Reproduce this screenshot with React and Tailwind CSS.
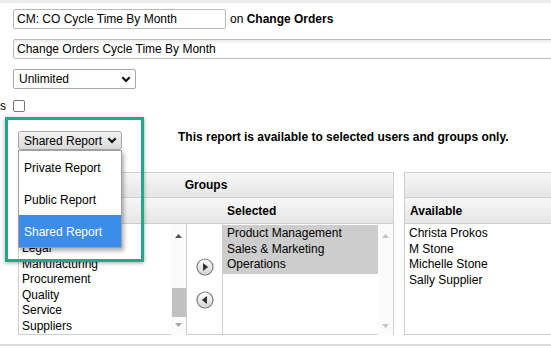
import React from 'react'

const GROUPS_AVAILABLE = ['Legal', 'Manufacturing', 'Procurement', 'Quality', 'Service', 'Suppliers']
const GROUPS_SELECTED = ['Product Management', 'Sales & Marketing', 'Operations']
const USERS_AVAILABLE = ['Christa Prokos', 'M Stone', 'Michelle Stone', 'Sally Supplier']
const SHARE_OPTIONS = ['Private Report', 'Public Report', 'Shared Report']

function Chevron() {
  return (
    <svg width="10" height="7" viewBox="0 0 10 7">
      <path d="M1.3 1.3 L5 5 L8.7 1.3" fill="none" stroke="#111" strokeWidth="2.2" />
    </svg>
  )
}

function ScrollArrow({ up, color }) {
  return (
    <svg width="7" height="4" viewBox="0 0 7 4">
      <polygon points={up ? '0,4 7,4 3.5,0' : '0,0 7,0 3.5,4'} fill={color} />
    </svg>
  )
}

function MoveButton({ dir }) {
  return (
    <svg width="18" height="18" viewBox="0 0 18 18">
      <defs>
        <linearGradient id={'mb' + dir} x1="0" y1="0" x2="0" y2="1">
          <stop offset="0" stopColor="#ffffff" />
          <stop offset="1" stopColor="#d4d4d4" />
        </linearGradient>
      </defs>
      <circle cx="9" cy="9" r="8" fill={'url(#mb' + dir + ')'} stroke="#7d7d7d" strokeWidth="1.2" />
      {dir === 'right'
        ? <polygon points="7,5 12.2,9 7,13" fill="#333" />
        : <polygon points="11,5 5.8,9 11,13" fill="#333" />}
    </svg>
  )
}

const headRow = 'bg-linear-to-b from-[#f7f7f7] to-[#e6e6e6] border-b border-[#cfcfcf]'

export default function App() {
  return (
    <div className="relative w-[551px] h-[349px] overflow-hidden bg-white text-black text-[12px] font-['Liberation_Sans',Arial,sans-serif]">
      <div className="h-[3px] bg-[#ececec]" />

      {/* report name */}
      <div className="flex items-center mt-[6px] pl-[13px] h-[20px]">
        <div className="w-[213px] h-[20px] border border-[#b8b8b8] rounded-[2px] pl-[3px] flex items-center">CM: CO Cycle Time By Month</div>
        <span className="ml-[4px]">on <b>Change Orders</b></span>
      </div>

      {/* description */}
      <div className="mt-[10px] pl-[13px]">
        <div className="w-[600px] h-[20px] border border-[#bdbdbd] rounded-[2px] pl-[3px] flex items-center shadow-[inset_0_2px_3px_rgba(0,0,0,0.08)]">Change Orders Cycle Time By Month</div>
      </div>

      {/* row limit */}
      <div className="mt-[10px] pl-[13px]">
        <div className="w-[123px] h-[20px] border border-[#a9a9a9] rounded-[2px] pl-[5px] pr-[4px] flex items-center justify-between">
          <span>Unlimited</span>
          <Chevron />
        </div>
      </div>

      {/* checkbox */}
      <div className="mt-[11px] flex items-center h-[12px]">
        <span className="w-[13px] leading-[12px]">s</span>
        <div className="w-[12px] h-[12px] border border-[#767676] rounded-[2px] bg-white" />
      </div>

      {/* sharing */}
      <div className="mt-[19px] flex items-start pl-[18px]">
        <div className="relative">
          <div className="w-[104px] h-[19px] border border-[#a5a5a5] rounded-[3px] bg-linear-to-b from-[#f3f3f3] to-[#d9d9d9] pl-[5px] flex items-center gap-[5px]">
            <span>Shared Report</span>
            <Chevron />
          </div>
          <div className="absolute z-20 left-0 top-[19px] w-[104px] bg-white border border-[#a0a0a0] shadow-[2px_3px_4px_rgba(0,0,0,0.3)]">
            {SHARE_OPTIONS.map(o => (
              <div key={o} className={'h-[32px] flex items-center pl-[5px] pt-[1px] ' + (o === 'Shared Report' ? 'bg-[#3c8de9] text-white' : '')}>{o}</div>
            ))}
          </div>
        </div>
        <span className="ml-[56px] -mt-[1px] font-bold leading-[14px]">This report is available to selected users and groups only.</span>
      </div>

      {/* groups / users */}
      <div className="flex mt-[22px]">
        <div className="ml-[18px] w-[376px] shrink-0 border border-[#cfcfcf]">
          <div className={'h-[25px] flex items-center justify-center font-bold ' + headRow}>Groups</div>
          <div className={'h-[26px] grid grid-cols-[168px_36px_1fr] font-bold ' + headRow}>
            <div />
            <div />
            <div className="flex items-center pl-[4px] pt-[1px]">Selected</div>
          </div>
          <div className="h-[110px] grid grid-cols-[168px_36px_1fr]">
            <div className="flex border-r border-[#cfcfcf]">
              <div className="flex-1 pl-[3px] pt-[17px] leading-[15.6px] overflow-hidden">
                {GROUPS_AVAILABLE.map(g => <div key={g}>{g}</div>)}
              </div>
              <div className="w-[15px] flex flex-col items-center pt-[10px] bg-[#fbfbfb]">
                <ScrollArrow up color="#505050" />
                <div className="mt-[50px] w-[14px] h-[29px] bg-[#c1c1c1]" />
                <div className="mt-[6px]"><ScrollArrow color="#a3a3a3" /></div>
              </div>
            </div>
            <div className="flex flex-col items-center pt-[34px] gap-[15px] border-r border-[#cfcfcf]">
              <MoveButton dir="right" />
              <MoveButton dir="left" />
            </div>
            <div className="flex">
              <div className="flex-1 pt-[1px] leading-[15.6px]">
                <div className="bg-[#cdcdcd] pt-[1px] pb-[1px]">
                  {GROUPS_SELECTED.map(g => <div key={g} className="pl-[4px]">{g}</div>)}
                </div>
              </div>
              <div className="w-[15px] flex flex-col items-center justify-between pt-[10px] pb-[7px] bg-[#fbfbfb]">
                <ScrollArrow up color="#c3c3c3" />
                <ScrollArrow color="#c3c3c3" />
              </div>
            </div>
          </div>
        </div>

        <div className="ml-[10px] w-[220px] shrink-0 border border-[#cfcfcf]">
          <div className={'h-[25px] ' + headRow} />
          <div className={'h-[26px] flex items-center pl-[5px] pt-[1px] font-bold ' + headRow}>Available</div>
          <div className="h-[110px] pt-[2px] pl-[4px] leading-[15.6px]">
            {USERS_AVAILABLE.map(u => <div key={u}>{u}</div>)}
          </div>
        </div>
      </div>

      <div className="mt-[9px] h-[2px] bg-[#dcdcdc]" />

      {/* highlight frame */}
      <div className="absolute z-10 left-[5px] top-[117px] w-[139px] h-[145px] border-[3px] border-[#22a88a] shadow-[0_1px_4px_rgba(0,0,0,0.35)] pointer-events-none" />
    </div>
  )
}
